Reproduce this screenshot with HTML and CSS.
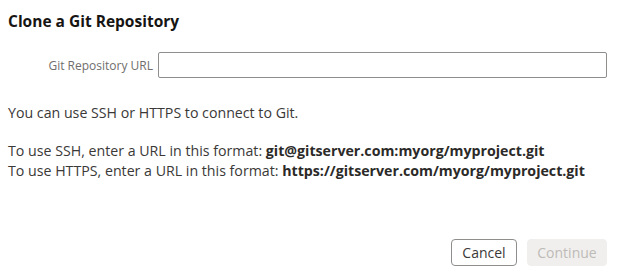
FILE: index.html
```html
<!DOCTYPE html>
<html>
<head>
<meta charset="utf-8">
<link rel="stylesheet" href="styles.css">
</head>
<body>
<div class="dialog">
  <h1 class="title">Clone a Git Repository</h1>
  <div class="form-row">
    <label class="label" for="url">Git Repository URL</label>
    <input class="input" id="url" type="text">
  </div>
  <div class="body">
    <p class="para">You can use SSH or HTTPS to connect to Git.</p>
    <p class="para">To use SSH, enter a URL in this format: <b>git@gitserver.com:myorg/myproject.git</b><br>To use HTTPS, enter a URL in this format: <b>https://gitserver.com/myorg/myproject.git</b></p>
  </div>
  <div class="footer">
    <button class="btn btn-cancel">Cancel</button>
    <button class="btn btn-continue" disabled>Continue</button>
  </div>
</div>
</body>
</html>
```
FILE: styles.css
```css
html, body {
  margin: 0;
  padding: 0;
  background: #fff;
}
body {
  font-family: "Open Sans", "Noto Sans", sans-serif;
  color: #3a3937;
  width: 619px;
  height: 280px;
  overflow: hidden;
}
.dialog {
  padding: 0 12px 0 8px;
  display: flex;
  flex-direction: column;
  height: 280px;
  box-sizing: border-box;
}
.title {
  margin: 11px 0 0 0;
  font-size: 15.5px;
  font-weight: 700;
  color: #161513;
  line-height: 20px;
}
.form-row {
  display: flex;
  align-items: center;
  margin-top: 21px;
}
.label {
  width: 150px;
  text-align: right;
  font-size: 12px;
  color: #6f6e6c;
  padding-right: 5px;
  box-sizing: border-box;
}
.input {
  flex: 1;
  height: 26px;
  box-sizing: border-box;
  border: 1px solid #8f8e8c;
  border-radius: 2px;
  margin: 0;
  padding: 0 6px;
}
.body {
  margin-top: 25px;
}
.para {
  margin: 0 0 18px 0;
  font-size: 14.2px;
  line-height: 20px;
}
.para b {
  font-weight: 700;
  color: #2b2a28;
}
.footer {
  margin-top: auto;
  margin-bottom: 14px;
  display: flex;
  justify-content: flex-end;
  gap: 10px;
}
.btn {
  font-family: inherit;
  font-size: 14px;
  height: 27px;
  border-radius: 4px;
  box-sizing: border-box;
  margin: 0;
}
.btn-cancel {
  width: 66px;
  background: #fff;
  border: 1px solid #8f8e8c;
  color: #3a3937;
}
.btn-continue {
  width: 80px;
  background: #f1efed;
  border: 1px solid #f1efed;
  color: #bdbbb8;
}
```
